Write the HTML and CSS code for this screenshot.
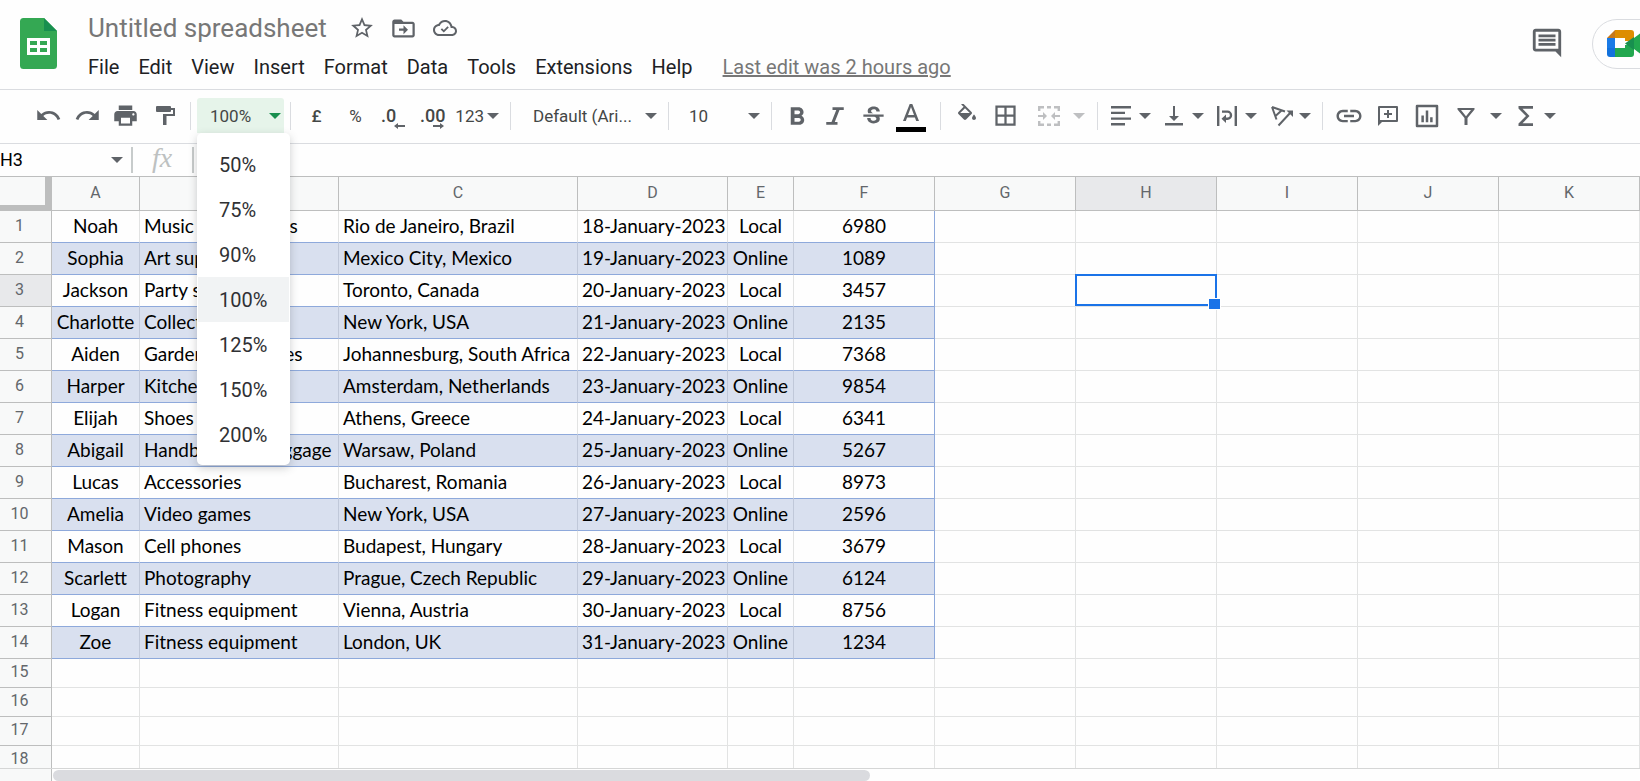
FILE: index.html
```
<!DOCTYPE html>
<html lang="en">
<head>
    <meta charset="UTF-8">
    <meta name="viewport" content="width=device-width, initial-scale=1.0">
    <title>Untitled spreadsheet</title>
    <link rel="stylesheet" href="styles.css">
</head>
<body>
    <header class="header">
        <svg class="logo" viewBox="0 0 37 51">
            <path fill="#34a853" d="M3.500 0H24l13 13v34.500a3.500 3.500 0 0 1-3.500 3.500h-30A3.500 3.500 0 0 1 0 47.500v-44A3.500 3.500 0 0 1 3.500 0z"/>
            <path fill="#188f4f" d="M24 0l13 13H24z"/>
            <path fill="#fff" fill-rule="evenodd" d="M7 20h23v17H7zM10 23v4h7v-4zM20 23v4h7v-4zM10 30v4h7v-4zM20 30v4h7v-4z"/>
        </svg>
        <div class="header-main">
            <div class="title-row">
                <h1 class="title">Untitled spreadsheet</h1>
                <button class="icon-button" aria-label="Star"><svg class="icon" viewBox="1 1 22 22"><path d="M22 9.240l-7.190-.620L12 2 9.190 8.630 2 9.240l5.460 4.730L5.820 21 12 17.270 18.180 21l-1.630-7.030L22 9.240zM12 15.400l-3.760 2.270 1-4.280-3.320-2.880 4.380-.380L12 6.100l1.710 4.040 4.380.380-3.320 2.880 1 4.280L12 15.400z"/></svg></button>
                <button class="icon-button" aria-label="Move"><svg class="icon icon-md" viewBox="0 0 24 24"><path fill-rule="evenodd" d="M20 6h-8l-2-2H4c-1.100 0-2 .900-2 2v12c0 1.100.900 2 2 2h16c1.100 0 2-.900 2-2V8c0-1.100-.900-2-2-2zm0 12H4V8h16v10zM12 17l4-4-4-4v3H8v2h4z"/></svg></button>
                <button class="icon-button" aria-label="Document status"><svg class="icon" viewBox="0 0 24 24"><path d="M19.350 10.040C18.670 6.590 15.640 4 12 4 9.110 4 6.600 5.640 5.350 8.040 2.340 8.360 0 10.910 0 14c0 3.310 2.690 6 6 6h13c2.760 0 5-2.240 5-5 0-2.640-2.050-4.780-4.650-4.960zM19 18H6c-2.210 0-4-1.790-4-4 0-2.050 1.530-3.760 3.560-3.970l1.070-.110.500-.950C8.080 7.140 9.940 6 12 6c2.620 0 4.880 1.860 5.390 4.430l.300 1.500 1.530.110c1.560.100 2.780 1.410 2.780 2.960 0 1.650-1.350 3-3 3zM10.800 14l-1.800-1.800-1.300 1.300 3.100 3 5-5-1.300-1.300z"/></svg></button>
            </div>
            <nav class="menubar">
                <a href="#">File</a>
                <a href="#">Edit</a>
                <a href="#">View</a>
                <a href="#">Insert</a>
                <a href="#">Format</a>
                <a href="#">Data</a>
                <a href="#">Tools</a>
                <a href="#">Extensions</a>
                <a href="#">Help</a>
                <a href="#" class="last-edit">Last edit was 2 hours ago</a>
            </nav>
        </div>
        <button class="icon-button comments" aria-label="Open comment history"><svg class="icon icon-xl" viewBox="0 0 24 24"><path d="M21.990 4c0-1.100-.890-2-1.990-2H4c-1.100 0-2 .900-2 2v12c0 1.100.900 2 2 2h14l4 4-.010-18zM20 4v12H4V4h16zM6 12h12v2H6zm0-3h12v2H6zm0-3h12v2H6z"/></svg></button>
        <button class="meet" aria-label="Join a call">
            <svg class="meet-icon" viewBox="0 0 40 28">
                <path fill="#c5781c" d="M0 8l8-8v8z"/>
                <path fill="#dd8d00" d="M8 0h16a3 3 0 0 1 3 3v8h-9V8H8z"/>
                <path fill="#1a7ae6" d="M0 8h8v10H0z"/>
                <path fill="#1271dc" d="M0 18h8v9H3a3 3 0 0 1-3-3z"/>
                <path fill="#22a74f" d="M8 18h10v-3h9v9a3 3 0 0 1-3 3H8zM27 8l8-6q3-1 3 2v19q0 3-3 2l-8-6z"/>
                <path fill="#188f4f" d="M18 13.500L27 7v13z"/>
            </svg>
        </button>
    </header>

    <div class="toolbar">
        <div class="group">
            <button class="tool" aria-label="Undo"><svg class="icon icon-md" viewBox="0 0 24 24"><path d="M12.500 8c-2.650 0-5.050.990-6.900 2.600L2 7v9h9l-3.620-3.620c1.390-1.160 3.160-1.880 5.120-1.880 3.540 0 6.550 2.310 7.600 5.500l2.370-.780C21.080 11.030 17.150 8 12.500 8z"/></svg></button>
            <button class="tool" aria-label="Redo"><svg class="icon icon-md" viewBox="0 0 24 24"><path d="M18.400 10.600C16.550 8.990 14.150 8 11.500 8c-4.650 0-8.580 3.030-9.960 7.220L3.900 16c1.050-3.190 4.050-5.500 7.600-5.500 1.950 0 3.730.720 5.120 1.880L13 16h9V7l-3.600 3.600z"/></svg></button>
            <button class="tool" aria-label="Print"><svg class="icon icon-md" viewBox="0 0 24 24"><path d="M19 8H5c-1.660 0-3 1.340-3 3v6h4v4h12v-4h4v-6c0-1.660-1.340-3-3-3zm-3 11H8v-5h8v5zm3-7c-.550 0-1-.450-1-1s.450-1 1-1 1 .450 1 1-.450 1-1 1zm-1-9H6v4h12V3z"/></svg></button>
            <button class="tool" aria-label="Paint format"><svg class="icon" viewBox="0 0 24 24"><path d="M4 2h13a1 1 0 0 1 1 1v1h4v8h-8.500v9H10V10h10V6h-2v1a1 1 0 0 1-1 1H4a1 1 0 0 1-1-1V3a1 1 0 0 1 1-1z"/></svg></button>
        </div>
        <span class="separator"></span>
        <div class="zoom">
            <button class="zoom-button" aria-haspopup="true" aria-expanded="true">100%<span class="arrow"></span></button>
            <div class="zoom-menu" role="menu">
                <button role="menuitem">50%</button>
                <button role="menuitem">75%</button>
                <button role="menuitem">90%</button>
                <button role="menuitem" class="current">100%</button>
                <button role="menuitem">125%</button>
                <button role="menuitem">150%</button>
                <button role="menuitem">200%</button>
            </div>
        </div>
        <span class="separator"></span>
        <button class="tool strong">£</button>
        <button class="tool">%</button>
        <button class="tool decimal strong" aria-label="Decrease decimal places">.0<svg class="decimal-arrow" viewBox="0 0 11 6"><path d="M0 3l4-3v2h7v2H4v2z"/></svg></button>
        <button class="tool decimal strong" aria-label="Increase decimal places">.00<svg class="decimal-arrow" viewBox="0 0 11 6"><path d="M11 3L7 0v2H0v2h7v2z"/></svg></button>
        <button class="format-button">123<span class="arrow"></span></button>
        <span class="separator"></span>
        <label class="picker font-picker">
            <select aria-label="Font"><option>Default (Ari...</option></select>
            <span class="arrow"></span>
        </label>
        <span class="separator"></span>
        <label class="picker size-picker">
            <select aria-label="Font size"><option>10</option></select>
            <span class="arrow"></span>
        </label>
        <span class="separator"></span>
        <div class="group text-styles">
            <button class="tool" aria-label="Bold"><svg class="icon icon-lg" viewBox="0 -1 24 24"><path d="M15.600 10.790c.970-.670 1.650-1.770 1.650-2.790 0-2.260-1.750-4-4-4H7v14h7.040c2.090 0 3.710-1.700 3.710-3.790 0-1.520-.860-2.820-2.150-3.420zM10 6.500h3c.830 0 1.500.670 1.500 1.500s-.670 1.500-1.500 1.500h-3v-3zm3.500 9H10v-3h3.500c.830 0 1.500.670 1.500 1.500s-.670 1.500-1.500 1.500z"/></svg></button>
            <button class="tool" aria-label="Italic"><svg class="icon icon-lg" viewBox="0 -1 24 24"><path d="M10 4v2.200h3L9.200 15.800H5V18h9v-2.200h-2.200l3.800-9.600H19V4z"/></svg></button>
            <button class="tool" aria-label="Strikethrough"><svg class="icon icon-md" viewBox="0 -1 24 24"><path d="M6.850 7.080C6.850 4.370 9.450 3 12.240 3c1.640 0 3 .490 3.900 1.280.770.650 1.460 1.730 1.460 3.240h-3.010c0-.310-.050-.590-.150-.850-.290-.860-1.200-1.280-2.250-1.280-1.860 0-2.340 1.020-2.340 1.700 0 .480.250.880.740 1.210.380.250.770.480 1.410.700H7.390c-.210-.340-.540-.890-.540-1.920zM21 12v-2H3v2h9.620c1.150.450 1.960.750 1.960 1.970 0 1-.810 1.670-2.280 1.670-1.540 0-2.930-.540-2.930-2.510H6.400c0 .550.080 1.130.240 1.580.810 2.290 3.290 3.300 5.670 3.300 2.270 0 5.300-.890 5.300-4.050 0-.300-.010-1.160-.480-1.940H21V12z"/></svg></button>
            <button class="tool" aria-label="Text color"><svg class="icon icon-color" viewBox="0 0 30 30"><path fill-rule="evenodd" d="M13.700 1L7 18h2.800l1.300-3.600h7.800l1.300 3.600H23L16.300 1zM12 12l3-8 3 8z"/><path fill="#000" d="M0 24h30v5H0z"/></svg></button>
        </div>
        <span class="separator"></span>
        <button class="tool" aria-label="Fill color"><svg class="icon" viewBox="0 -1 24 24"><path transform="translate(0 -2)" d="M16.560 8.940L7.620 0 6.210 1.410l2.380 2.380-5.150 5.150c-.590.590-.590 1.540 0 2.120l5.500 5.500c.290.290.680.440 1.060.440s.770-.150 1.060-.440l5.500-5.500c.590-.580.590-1.530 0-2.120zM5.210 10L10 5.210 14.790 10H5.210zM19 11.500s-2 2.170-2 3.500c0 1.100.900 2 2 2s2-.900 2-2c0-1.330-2-3.500-2-3.500z"/></svg></button>
        <button class="tool" aria-label="Borders"><svg class="icon icon-md" viewBox="0 0 24 24"><path d="M3 3v18h18V3H3zm8 16H5v-6h6v6zm0-8H5V5h6v6zm8 8h-6v-6h6v6zm0-8h-6V5h6v6z"/></svg></button>
        <button class="split merge" disabled aria-label="Merge cells"><svg class="icon" viewBox="0 0 24 24"><path d="M1 2h6v2.400H3.400V7H1zM10 2h4v2.400h-4zM17 2h6v5h-2.400V4.400H17zM1 17h2.400v2.600H7V22H1zM10 19.600h4V22h-4zM20.600 17H23v5h-6v-2.400h3.600zM1 11h5V8l4 4-4 4v-3H1zM23 11h-5V8l-4 4 4 4v-3h5z"/></svg><span class="arrow"></span></button>
        <span class="separator"></span>
        <button class="split" aria-label="Horizontal align"><svg class="icon" viewBox="0 0 24 24"><path d="M2 2h20v2.400H2zM2 7.700h14v2.400H2zM2 13.400h20v2.400H2zM2 19.100h14v2.400H2z"/></svg><span class="arrow"></span></button>
        <button class="split" aria-label="Vertical align"><svg class="icon" viewBox="0 0 24 24"><path d="M17 12h-4V2h-2v10H7l5 5zM3 19v2.400h18V19z"/></svg><span class="arrow"></span></button>
        <button class="split" aria-label="Text wrapping"><svg class="icon" viewBox="0 0 24 24"><path d="M2 2h2.400v20H2zM19.600 2H22v20h-2.400zM7 6.500h5.500a4.700 4.700 0 0 1 0 9.400H11V19l-4.500-4.200L11 10.600v3h1.500a2.400 2.400 0 0 0 0-4.800H7z"/></svg><span class="arrow"></span></button>
        <button class="split rotate" aria-label="Text rotation"><svg class="icon" viewBox="0 0 24 24"><path fill="none" stroke="#5f6368" stroke-width="2" d="M2 3l13 4.500M2 3l4.500 12.500M11.500 6.500L5.500 12M8.500 21.500L21 8"/><path d="M16.500 6.500H23V13z"/></svg><span class="arrow"></span></button>
        <span class="separator"></span>
        <button class="tool" aria-label="Insert link"><svg class="icon icon-lg" viewBox="0 0 24 24"><path d="M3.900 12c0-1.710 1.390-3.100 3.100-3.100h4V7H7c-2.760 0-5 2.240-5 5s2.240 5 5 5h4v-1.900H7c-1.710 0-3.100-1.390-3.100-3.100zM8 13h8v-2H8v2zm9-6h-4v1.900h4c1.710 0 3.100 1.390 3.100 3.100s-1.390 3.100-3.100 3.100h-4V17h4c2.760 0 5-2.240 5-5s-2.240-5-5-5z"/></svg></button>
        <button class="tool" aria-label="Insert comment"><svg class="icon" viewBox="0 0 24 24"><path fill-rule="evenodd" d="M3 2h18q1 0 1 1v14q0 1-1 1H6l-4 4V3q0-1 1-1zM4 4v12h16V4zM11 6h2v3h3v2h-3v3h-2v-3H8V9h3z"/></svg></button>
        <button class="tool" aria-label="Insert chart"><svg class="icon icon-lg" viewBox="0 0 24 24"><path fill-rule="evenodd" d="M4 3h16q1 0 1 1v16q0 1-1 1H4q-1 0-1-1V4q0-1 1-1zM5 5v14h14V5zM7.500 11.500h2V17h-2zM11 7.500h2V17h-2zM14.500 13h2v4h-2z"/></svg></button>
        <button class="split wide" aria-label="Filter"><svg class="icon" viewBox="0 0 24 24"><path fill-rule="evenodd" d="M3.500 4h17v1.500L13.500 14v7h-3v-7L3.500 5.500zM7 6l5 6.200L17 6z"/></svg><span class="arrow"></span></button>
        <button class="split functions" aria-label="Functions"><svg class="icon" viewBox="0 0 24 24"><path d="M19 2H4.500v2.500L12 12l-7.500 7.500V22H19v-2.700H8.500L15.500 12l-7-7.300H19z"/></svg><span class="arrow"></span></button>
    </div>

    <div class="formula-bar">
        <label class="name-box">
            <input type="text" value="H3" aria-label="Name box">
            <span class="arrow"></span>
        </label>
        <label class="fx" for="formula">fx</label>
        <input type="text" id="formula" class="formula-input">
    </div>

    <main class="grid">
        <table class="sheet">
            <colgroup>
                <col class="col-head">
                <col class="col-a">
                <col class="col-b">
                <col class="col-c">
                <col class="col-d">
                <col class="col-e">
                <col class="col-std">
                <col class="col-std">
                <col class="col-std">
                <col class="col-std">
                <col class="col-std">
                <col>
            </colgroup>
            <thead>
                <tr>
                    <td class="corner"></td>
                    <th>A</th>
                    <th>B</th>
                    <th>C</th>
                    <th>D</th>
                    <th>E</th>
                    <th>F</th>
                    <th>G</th>
                    <th class="active">H</th>
                    <th>I</th>
                    <th>J</th>
                    <th>K</th>
                </tr>
            </thead>
            <tbody id="rows"></tbody>
        </table>
    </main>
    <div class="scrollbar">
        <div class="scrollbar-head"></div>
        <div class="scrollbar-track"><div class="scrollbar-thumb"></div></div>
    </div>

    <script>
        const data = [
            ['Noah', 'Music instruments', 'Rio de Janeiro, Brazil', '18-January-2023', 'Local', '6980'],
            ['Sophia', 'Art supplies', 'Mexico City, Mexico', '19-January-2023', 'Online', '1089'],
            ['Jackson', 'Party supplies', 'Toronto, Canada', '20-January-2023', 'Local', '3457'],
            ['Charlotte', 'Collectibles', 'New York, USA', '21-January-2023', 'Online', '2135'],
            ['Aiden', 'Gardening supplies', 'Johannesburg, South Africa', '22-January-2023', 'Local', '7368'],
            ['Harper', 'Kitchenware', 'Amsterdam, Netherlands', '23-January-2023', 'Online', '9854'],
            ['Elijah', 'Shoes', 'Athens, Greece', '24-January-2023', 'Local', '6341'],
            ['Abigail', 'Handbags and luggage', 'Warsaw, Poland', '25-January-2023', 'Online', '5267'],
            ['Lucas', 'Accessories', 'Bucharest, Romania', '26-January-2023', 'Local', '8973'],
            ['Amelia', 'Video games', 'New York, USA', '27-January-2023', 'Online', '2596'],
            ['Mason', 'Cell phones', 'Budapest, Hungary', '28-January-2023', 'Local', '3679'],
            ['Scarlett', 'Photography', 'Prague, Czech Republic', '29-January-2023', 'Online', '6124'],
            ['Logan', 'Fitness equipment', 'Vienna, Austria', '30-January-2023', 'Local', '8756'],
            ['Zoe', 'Fitness equipment', 'London, UK', '31-January-2023', 'Online', '1234']
        ];
        const rows = document.getElementById('rows');

        for (let r = 1; r <= 18; r++) {
            const tr = document.createElement('tr');
            const head = document.createElement('th');
            head.textContent = r;
            if (r === 3) head.className = 'active';
            tr.appendChild(head);
            if (r <= data.length) tr.className = 'filled';
            for (let c = 0; c < 11; c++) {
                const td = document.createElement('td');
                if (r <= data.length && c < 6) {
                    td.textContent = data[r - 1][c];
                    td.className = 'data';
                }
                if (r === 3 && c === 7) td.className = 'selected';
                tr.appendChild(td);
            }
            rows.appendChild(tr);
        }
    </script>
</body>
</html>
```
FILE: styles.css
```
* {
    box-sizing: border-box;
}
body {
    margin: 0;
    height: 100vh;
    display: flex;
    flex-direction: column;
    overflow: hidden;
    background-color: #fefefe;
    color: #202124;
    font-family: Roboto, sans-serif;
}
button, input, select {
    font: inherit;
    color: inherit;
    border: none;
    background: none;
    padding: 0;
    margin: 0;
}
button {
    display: flex;
    align-items: center;
    justify-content: center;
    cursor: pointer;
}
.icon {
    width: 24px;
    height: 24px;
    fill: #5f6368;
    flex-shrink: 0;
}
.icon-md {
    width: 27px;
    height: 27px;
}
.icon-lg {
    width: 30px;
    height: 30px;
}
.icon-xl {
    width: 34px;
    height: 34px;
}
.icon-color {
    width: 30px;
    height: 30px;
    margin-top: 4px;
}
.arrow {
    border: 6px solid transparent;
    border-top-color: #5f6368;
    border-bottom: none;
    flex-shrink: 0;
}

/* Header */
.header {
    display: flex;
    align-items: flex-start;
    height: 90px;
    flex-shrink: 0;
    padding-left: 20px;
    border-bottom: 1px solid #dadce0;
    overflow: hidden;
}
.logo {
    width: 37px;
    height: 51px;
    margin-top: 18px;
}
.header-main {
    flex: 1;
    padding: 10px 0 0 31px;
}
.title-row {
    display: flex;
    align-items: center;
    gap: 16px;
    height: 36px;
}
.title {
    margin: 0 7px 0 0;
    font-size: 26px;
    font-weight: 400;
    color: #777;
}
.menubar {
    display: flex;
    gap: 19px;
    height: 42px;
    align-items: center;
    font-size: 20px;
}
.menubar a {
    color: #202124;
    text-decoration: none;
}
.menubar .last-edit {
    margin-left: 11px;
    color: #777;
    text-decoration: underline;
}
.comments {
    margin: 26px 28px 0 0;
}
.meet {
    width: 90px;
    height: 50px;
    margin: 19px -42px 0 0;
    padding-left: 14px;
    justify-content: flex-start;
    border: 1px solid #dadce0;
    border-radius: 25px;
}
.meet-icon {
    width: 40px;
    height: 28px;
}

/* Toolbar */
.toolbar {
    display: flex;
    align-items: center;
    height: 54px;
    flex-shrink: 0;
    padding: 0 0 2px 29px;
    border-bottom: 1px solid #dadce0;
    font-size: 17px;
    color: #444746;
}
.group {
    display: flex;
    width: 155px;
    flex-shrink: 0;
}
.group .tool {
    flex: 1;
}
.text-styles {
    width: 152px;
    margin-right: 4px;
}
.tool {
    width: 39px;
    height: 35px;
    flex-shrink: 0;
}
.strong {
    font-weight: 500;
}
.separator {
    width: 1px;
    height: 28px;
    margin: 0 6px;
    background-color: #dadce0;
    flex-shrink: 0;
}
.zoom {
    position: relative;
    width: 87px;
    flex-shrink: 0;
}
.zoom-button {
    width: 100%;
    height: 35px;
    justify-content: space-between;
    padding: 0 3px 0 13px;
    background-color: #e6f4ea;
    border-radius: 3px 3px 0 0;
}
.zoom-button .arrow {
    border-top-color: #188f4f;
}
.zoom-menu {
    position: absolute;
    top: 35px;
    left: 0;
    z-index: 2;
    width: 93px;
    padding: 9px 1px 8px;
    background-color: #fff;
    border-radius: 5px;
    box-shadow: 0 3px 8px rgba(60, 64, 67, 0.25);
    color: #303134;
    font-size: 20px;
}
.zoom-menu button {
    width: 100%;
    height: 45px;
    justify-content: flex-start;
    padding-left: 21px;
}
.zoom-menu .current {
    background-color: #f1f3f4;
}
.decimal {
    position: relative;
    justify-content: flex-start;
    padding-left: 6px;
    font-size: 18px;
}
.decimal-arrow {
    position: absolute;
    right: 9px;
    bottom: 4px;
    width: 11px;
    height: 6px;
    fill: #5f6368;
}
.format-button {
    width: 51px;
    height: 35px;
    justify-content: flex-end;
    padding-right: 5px;
    gap: 3px;
    flex-shrink: 0;
}
.picker {
    display: flex;
    align-items: center;
    justify-content: space-between;
    padding: 0 5px 0 16px;
    flex-shrink: 0;
}
.picker select {
    appearance: none;
    width: 104px;
}
.font-picker {
    width: 145px;
}
.size-picker {
    width: 90px;
    padding-left: 14px;
}
.size-picker select {
    width: 40px;
}
.split {
    width: 53px;
    height: 35px;
    justify-content: flex-start;
    padding-left: 5px;
    gap: 6px;
    flex-shrink: 0;
}
.split.merge {
    width: 66px;
    padding-left: 12px;
    gap: 12px;
    opacity: 0.4;
}
.split.rotate {
    padding-left: 7px;
    gap: 5px;
}
.split.wide {
    width: 61px;
    padding-left: 8px;
    gap: 12px;
}
.split.functions {
    padding-left: 7px;
    gap: 6px;
}

/* Formula bar */
.formula-bar {
    display: flex;
    align-items: center;
    height: 33px;
    flex-shrink: 0;
    padding-bottom: 1px;
    border-bottom: 1px solid #bdbebe;
    font-size: 18px;
    color: #000;
}
.name-box {
    display: flex;
    align-items: center;
    justify-content: space-between;
    width: 133px;
    height: 26px;
    padding-right: 8px;
    border-right: 2px solid #c7cbcb;
}
.name-box input {
    width: 100px;
}
.fx {
    width: 61px;
    height: 26px;
    padding-left: 19px;
    border-right: 2px solid #c7cbcb;
    font-family: "Liberation Serif", serif;
    font-size: 28px;
    font-style: italic;
    line-height: 22px;
    color: #bdc1c1;
}
.formula-input {
    flex: 1;
    padding: 0 8px;
}

/* Sheet */
.grid {
    flex: 1;
    min-height: 0;
    overflow: hidden;
}
.sheet {
    width: 100%;
    table-layout: fixed;
    border-spacing: 0;
    font-family: Lato, sans-serif;
    font-size: 19px;
    line-height: 20px;
    color: #000;
}
.col-head { width: 52px; }
.col-a { width: 88px; }
.col-b { width: 199px; }
.col-c { width: 239px; }
.col-d { width: 150px; }
.col-e { width: 66px; }
.col-std { width: 141px; }
.sheet th {
    padding: 0 0 2px;
    background-color: #f8f9f9;
    border-right: 1px solid #bdbebe;
    border-bottom: 1px solid #bdbebe;
    font-family: Roboto, sans-serif;
    font-size: 16px;
    font-weight: 400;
    color: #63676b;
}
.sheet thead th {
    height: 34px;
}
.sheet tbody th {
    padding-right: 12px;
}
.sheet th.active {
    background-color: #e8e9eb;
}
.sheet .corner {
    background-color: #f8f9f9;
    border-right: 7px solid #bdbebe;
    border-bottom: 6px solid #bdbebe;
}
.sheet td {
    height: 29px;
    padding: 0 4px 2px;
    border-right: 1px solid #e2e3e3;
    border-bottom: 1px solid #e2e3e3;
    white-space: nowrap;
}
.sheet .filled td {
    height: 32px;
}
.sheet .data {
    text-align: center;
    border-bottom-color: #8ea9db;
}
.sheet .data:nth-child(3),
.sheet .data:nth-child(4) {
    text-align: left;
}
.sheet .filled:nth-child(even) .data {
    background-color: #d9e0ef;
    border-right-color: #c0c8d9;
}
.sheet .filled .data:nth-child(7),
.sheet .filled:nth-child(even) .data:nth-child(7) {
    border-right-color: #8ea9db;
}
.selected {
    position: relative;
}
.selected::before {
    content: "";
    position: absolute;
    inset: -1px -1px 0 -1px;
    border: 2px solid #1a73e8;
}
.selected::after {
    content: "";
    position: absolute;
    right: -5px;
    bottom: -4px;
    width: 11px;
    height: 10px;
    background-color: #1a73e8;
    border: 1px solid #fff;
}
.scrollbar {
    display: flex;
    height: 13px;
    flex-shrink: 0;
    border-top: 1px solid #d5d6d6;
}
.scrollbar-head {
    width: 52px;
    background-color: #f8f9f9;
    border-right: 1px solid #bdbebe;
}
.scrollbar-track {
    flex: 1;
    padding: 1px;
}
.scrollbar-thumb {
    width: 51.5%;
    height: 11px;
    background-color: #dadbdf;
    border-radius: 6px;
}
```
